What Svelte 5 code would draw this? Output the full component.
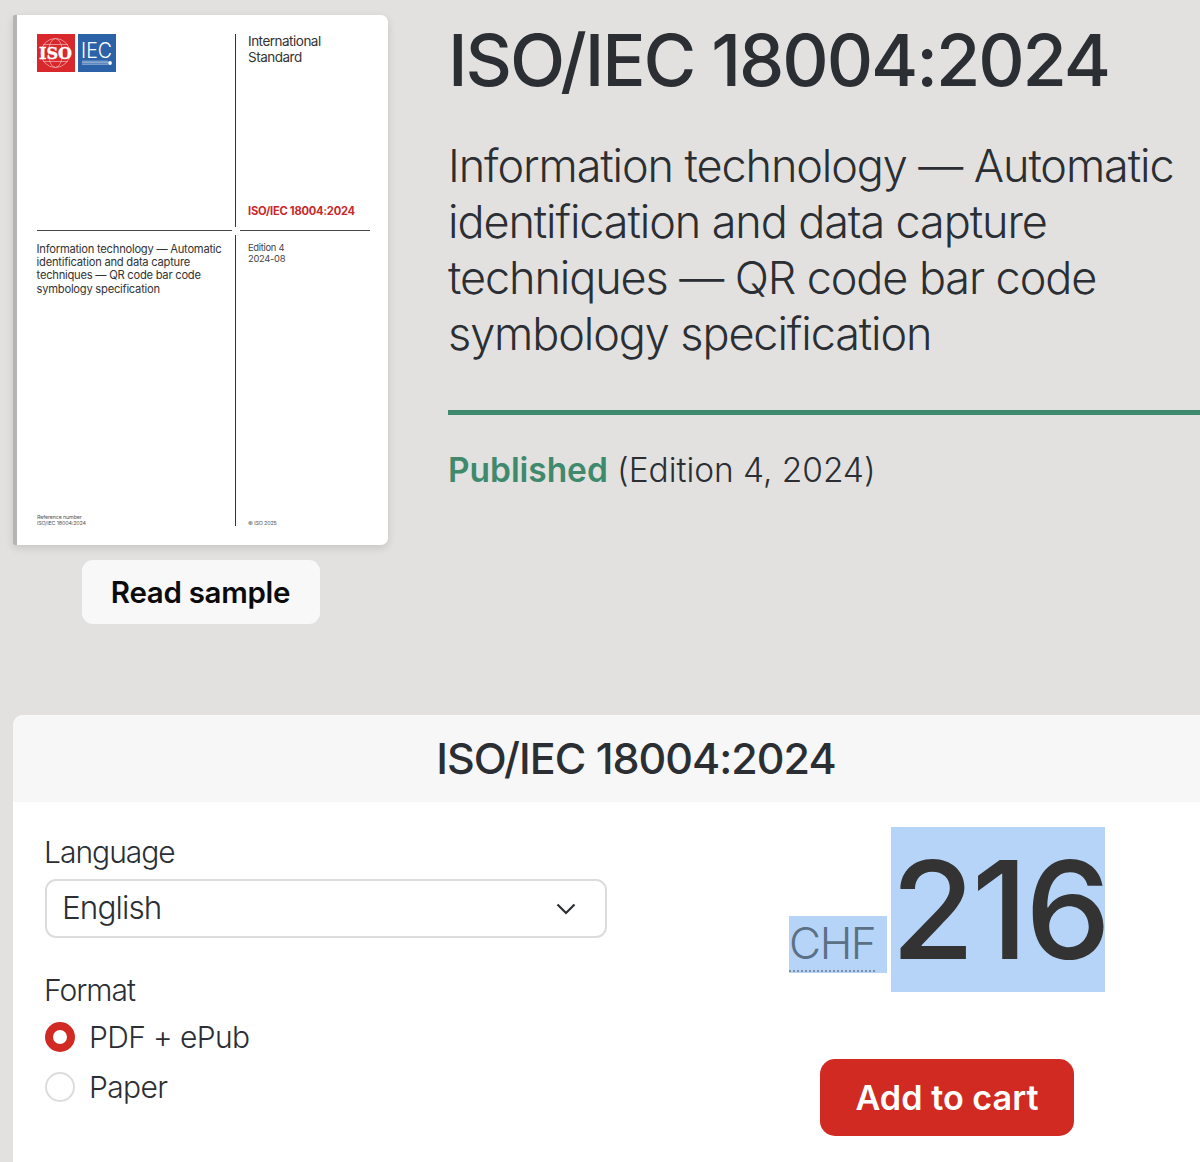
<script>
  const title = 'ISO/IEC 18004:2024';
</script>

<div class="page">
  <section class="top">
    <div class="cover-col">
      <div class="cover">
        <div class="cover-grid">
          <div class="cell logo-cell">
            <svg class="logo" width="79" height="38" viewBox="0 0 79 38" aria-hidden="true">
              <rect x="0" y="0" width="38" height="38" fill="#d8282c" />
              <g fill="none" stroke="#f3b6b4" stroke-width="0.7">
                <circle cx="18.5" cy="19" r="14.5" />
                <ellipse cx="18.5" cy="19" rx="7" ry="14.5" />
                <path d="M6 10.5h25M6 27.5h25" />
              </g>
              <text x="2" y="24.5" textLength="33" lengthAdjust="spacingAndGlyphs" class="iso-mark">ISO</text>
              <rect x="41" y="0" width="38" height="38" fill="#2b62a8" />
              <text x="44" y="23.5" textLength="31" lengthAdjust="spacingAndGlyphs" class="iec-mark">IEC</text>
              <path d="M45 27.2h26M45 28.7h26M45 30.2h26" stroke="#b7cde6" stroke-width="0.8" />
              <circle cx="73" cy="29" r="1.9" fill="#fff" />
            </svg>
          </div>
          <div class="cell kind-cell">
            <p class="kind">International<br />Standard</p>
            <p class="cover-code">{title}</p>
          </div>
          <div class="cell desc-cell">
            <p class="cover-desc">Information technology — Automatic identification and data capture techniques — QR code bar code symbology specification</p>
            <p class="ref">Reference number<br />ISO/IEC 18004:2024</p>
          </div>
          <div class="cell edition-cell">
            <p class="edition">Edition 4<br />2024-08</p>
            <p class="copy">© ISO 2025</p>
          </div>
        </div>
      </div>
      <button class="sample" type="button">Read sample</button>
    </div>

    <div class="heading">
      <h1>{title}</h1>
      <h2>Information technology — Automatic identification and data capture techniques — QR code bar code symbology specification</h2>
      <div class="rule"></div>
      <p class="status"><strong>Published</strong> (Edition 4, 2024)</p>
    </div>
  </section>

  <section class="buy">
    <header class="buy-head">{title}</header>
    <div class="buy-body">
      <div class="options">
        <div class="field-label lang-label">Language</div>
        <div class="select">
          <span>English</span>
          <svg width="22" height="12" viewBox="0 0 22 12" aria-hidden="true">
            <path d="M2.5 1.5 11 10l8.5-8.5" fill="none" stroke="#2b2f33" stroke-width="2.2" />
          </svg>
        </div>
        <div class="field-label format-label">Format</div>
        <div class="radio-row">
          <span class="radio on"></span>
          <span>PDF + ePub</span>
        </div>
        <div class="radio-row">
          <span class="radio"></span>
          <span>Paper</span>
        </div>
      </div>
      <div class="purchase">
        <div class="price">
          <span class="currency"><span class="dotted">CHF</span></span>
          <span class="amount">216</span>
        </div>
        <button class="cart" type="button">Add to cart</button>
      </div>
    </div>
  </section>
</div>

<style>
  :global(body) {
    margin: 0;
    background: #e2e1e0;
    overflow: hidden;
  }
  .page {
    height: 1162px;
    box-sizing: border-box;
    padding: 15px 0 0 13px;
    font-family: Inter, "Liberation Sans", sans-serif;
    color: #2b2f33;
    overflow: hidden;
  }
  p, h1, h2 {
    margin: 0;
  }
  .top {
    display: flex;
    height: 700px;
  }
  .cover-col {
    width: 375px;
    flex: none;
    display: flex;
    flex-direction: column;
    align-items: center;
  }
  .cover {
    width: 375px;
    height: 530px;
    box-sizing: border-box;
    background: #fff;
    border-left: 4px solid #b4b4b2;
    border-radius: 2px 7px 7px 2px;
    box-shadow: 0 3px 8px rgba(0, 0, 0, 0.12);
    padding: 19px 18px 19px 20px;
  }
  .cover-grid {
    position: relative;
    height: 100%;
    display: grid;
    grid-template-columns: 199px 134px;
    grid-template-rows: 197px 1fr;
  }
  .cover-grid::after {
    content: "";
    position: absolute;
    left: 195px;
    top: 193px;
    width: 8px;
    height: 8px;
    background: #fff;
  }
  .cell {
    display: flex;
    flex-direction: column;
    justify-content: space-between;
  }
  .logo-cell {
    border-right: 1px solid #333;
    border-bottom: 1px solid #444;
  }
  .logo {
    display: block;
    margin-left: -0.5px;
    margin-top: -0.3px;
  }
  .iso-mark {
    font: 900 16.5px "DejaVu Serif", serif;
    fill: #fff;
    stroke: #fff;
    stroke-width: 0.35;
  }
  .iec-mark {
    font: 300 21px Inter, sans-serif;
    fill: #fff;
  }
  .kind-cell {
    padding-left: 12px;
    border-bottom: 1px solid #444;
  }
  .kind {
    font-size: 13.5px;
    line-height: 16px;
    letter-spacing: -0.5px;
    color: #333;
    margin-top: -1px;
  }
  .cover-code {
    font-size: 11.2px;
    font-weight: 700;
    color: #c8282b;
    letter-spacing: -0.25px;
    line-height: 14px;
    padding-bottom: 12px;
  }
  .desc-cell {
    border-right: 1px solid #333;
    padding-top: 12px;
  }
  .cover-desc {
    font-size: 11.2px;
    line-height: 13.2px;
    letter-spacing: -0.25px;
    color: #333;
    width: 190px;
    margin-left: -0.4px;
  }
  .ref, .copy {
    font-size: 5.4px;
    line-height: 6.6px;
    letter-spacing: -0.15px;
    color: #555;
    margin-bottom: -1px;
  }
  .edition-cell {
    padding-left: 12px;
    padding-top: 11px;
  }
  .edition {
    font-size: 9.4px;
    line-height: 11.4px;
    letter-spacing: -0.3px;
    color: #444;
  }
  .sample {
    margin-top: 15px;
    width: 238px;
    height: 64px;
    border: 0;
    border-radius: 11px;
    background: #f8f8f8;
    color: #0b0b0b;
    font: 600 29.5px Inter, sans-serif;
    letter-spacing: -0.3px;
  }
  .heading {
    flex: 1;
    min-width: 0;
    padding-left: 60px;
  }
  h1 {
    font-size: 72px;
    font-weight: 500;
    line-height: 88px;
    letter-spacing: -2.1px;
    margin-top: 1px;
    white-space: nowrap;
  }
  h2 {
    font-size: 45px;
    font-weight: 300;
    line-height: 56px;
    margin-top: 34px;
    letter-spacing: -1.1px;
  }
  .rule {
    height: 5px;
    background: #3f8a6d;
    margin-top: 48px;
  }
  .status {
    margin-top: 31px;
    font-size: 33.5px;
    line-height: 48px;
    font-weight: 300;
    letter-spacing: -0.05px;
  }
  .status strong {
    font-weight: 600;
    color: #3f8a6d;
  }
  .buy {
    background: #fff;
    border-radius: 10px 0 0 0;
    height: 447px;
    overflow: hidden;
  }
  .buy-head {
    height: 87px;
    background: #f7f7f7;
    padding-left: 59px;
    text-align: center;
    font-size: 43px;
    font-weight: 500;
    line-height: 86px;
    letter-spacing: -1px;
  }
  .buy-body {
    display: flex;
    padding-left: 32px;
  }
  .options {
    width: 562px;
    flex: none;
    padding-top: 29px;
    font-weight: 300;
    font-size: 30px;
    letter-spacing: -0.6px;
  }
  .field-label {
    line-height: 44px;
    height: 48px;
    letter-spacing: -1px;
    text-indent: -1px;
  }
  .lang-label {
    line-height: 42px;
  }
  .format-label {
    margin-top: 30px;
    height: 44px;
  }
  .select {
    height: 59px;
    box-sizing: border-box;
    border: 2px solid #dcdcdc;
    border-radius: 11px;
    display: flex;
    align-items: center;
    justify-content: space-between;
    padding: 0 28px 0 15px;
    font-size: 31.5px;
    letter-spacing: -0.9px;
  }
  .select span {
    position: relative;
    top: -1px;
  }
  .radio-row {
    display: flex;
    align-items: center;
    gap: 14px;
    height: 50px;
  }
  .radio {
    width: 30px;
    height: 30px;
    box-sizing: border-box;
    border: 2px solid #dcdcdc;
    border-radius: 50%;
    background: #fff;
    flex: none;
  }
  .radio.on {
    border: 8px solid #d12a22;
  }
  .purchase {
    flex: 1;
    display: flex;
    flex-direction: column;
    align-items: flex-start;
    padding-left: 182px;
  }
  .price {
    display: flex;
    align-items: flex-end;
    margin-top: 25px;
    height: 165px;
    gap: 4px;
  }
  .currency {
    background: #b6d4f8;
    height: 57px;
    width: 98px;
    margin-bottom: 19px;
    color: #5c7085;
    font-size: 44px;
    font-weight: 300;
    line-height: 55px;
    letter-spacing: -1.4px;
    box-sizing: border-box;
  }
  .dotted {
    display: inline-block;
    height: 54px;
    border-bottom: 2px dotted #7d8ea3;
    width: 86px;
  }
  .amount {
    display: block;
    width: 214px;
    background: #b6d4f8;
    color: #333;
    font-size: 136px;
    font-weight: 500;
    line-height: 165px;
    letter-spacing: -3px;
    height: 165px;
    white-space: nowrap;
  }
  .cart {
    margin-top: 67px;
    margin-left: 31px;
    width: 254px;
    height: 77px;
    border: 0;
    border-radius: 15px;
    background: #d12a22;
    color: #fff;
    font: 600 34.2px Inter, sans-serif;
  }
</style>
